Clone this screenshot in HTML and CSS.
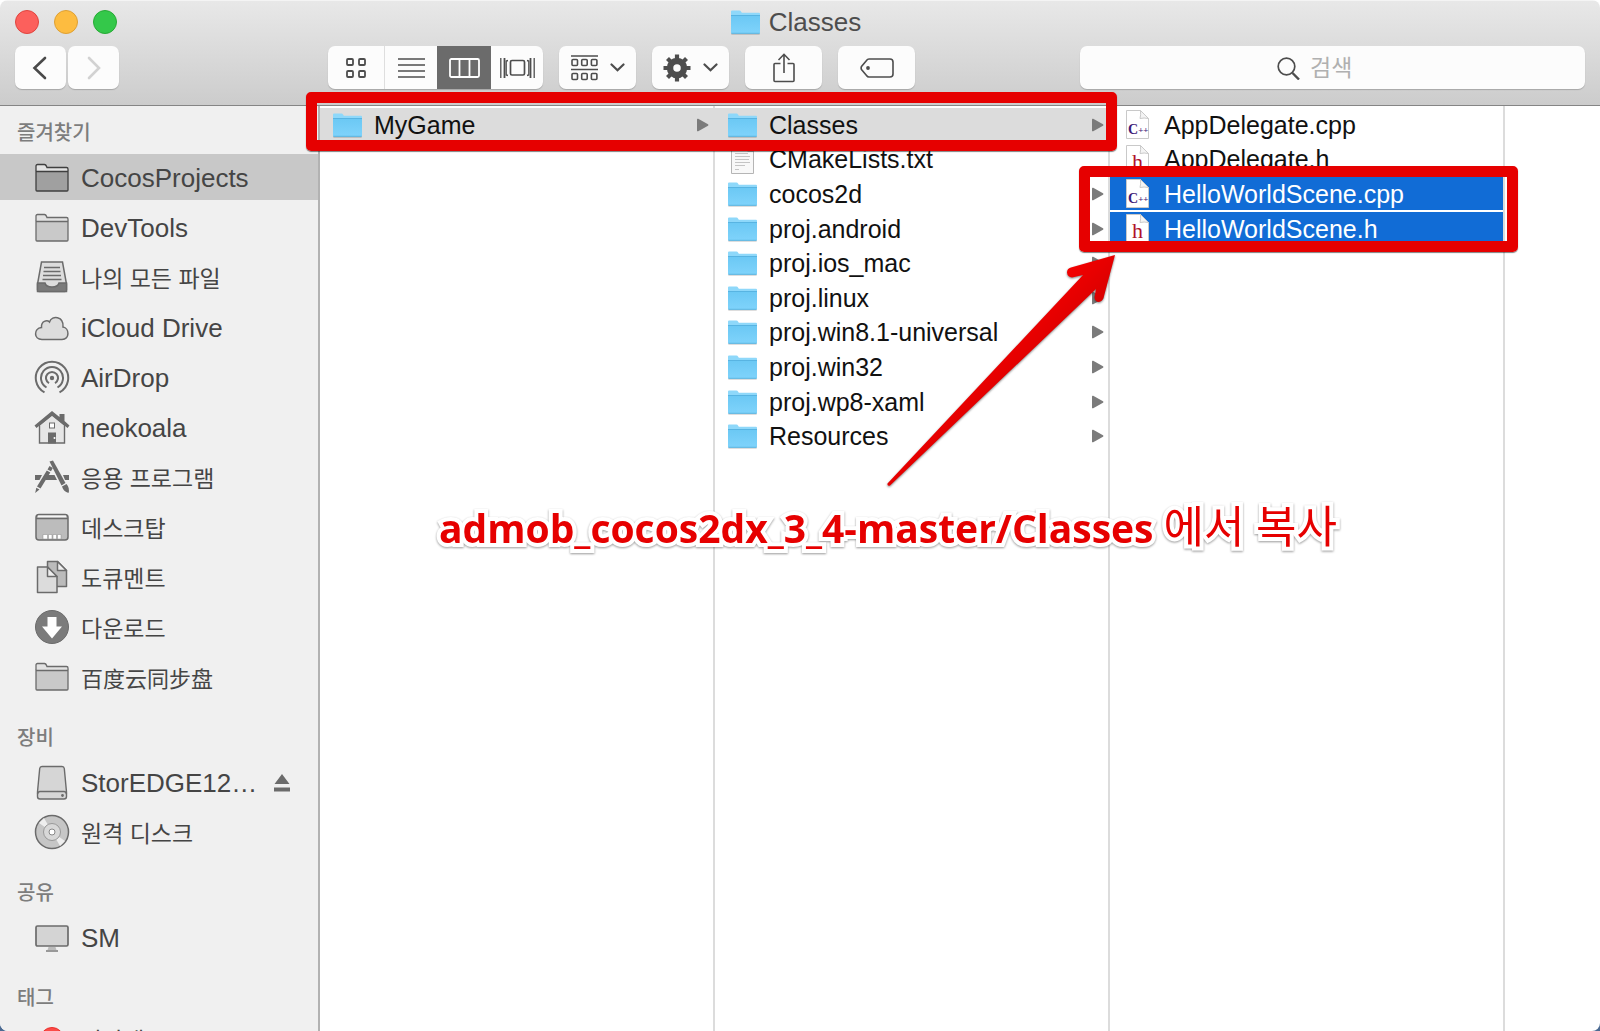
FILE: index.html
```html
<!DOCTYPE html>
<html lang="ko">
  <head>
    <meta charset="UTF-8" />
    <meta name="viewport" content="width=device-width, initial-scale=1.0" />
    <title>Classes</title>
    <link rel="stylesheet" href="styles.css">
  </head>
  <body>
    <!-- Shared icons -->
    <svg class="sprite" aria-hidden="true">
      <defs>
        <linearGradient id="folderFill" x1="0" y1="0" x2="0" y2="1">
          <stop offset="0" stop-color="#6bc8f4" />
          <stop offset="1" stop-color="#7fd3fb" />
        </linearGradient>
        <linearGradient id="arrowFill" x1="0" y1="0" x2="1" y2="1">
          <stop offset="0.4" stop-color="#f80000" />
          <stop offset="0.6" stop-color="#d40000" />
        </linearGradient>
      </defs>
      <symbol id="folder" viewBox="0 0 29 24">
        <path d="M0 23V1.500Q0 .5 1 .5H8.500Q9.500 .5 10 1.500L10.800 2.800H28Q29 2.800 29 3.800V23Z" fill="#8ed8fa" />
        <path d="M0 5.500H29V22.500Q29 23.500 28 23.500H1Q0 23.500 0 22.500Z" fill="url(#folderFill)" />
        <path d="M0 5.500H29M.5 23.300H28.500" stroke="#58b4e2" fill="none" />
      </symbol>
      <symbol id="page" viewBox="0 0 23 29">
        <path d="M.5 .5H14.500L22.500 8.500V28.500H.5Z" fill="#fff" stroke="#c9c9c9" />
        <path d="M14.500 .5Q15 5 14 8.500Q18 7.500 22.500 8.500Z" fill="#f4f4f4" stroke="#c9c9c9" />
      </symbol>
      <symbol id="text-page" viewBox="0 0 23 29">
        <path d="M.5 .5H16.500L22.500 6.500V28.500H.5Z" fill="#f8f8f8" stroke="#b5b5b5" />
        <path d="M16.500 .5V6.500H22.500Z" fill="#999" />
        <path d="M4 8.500H17M4 11.500H19M4 14.500H18M4 17.500H19M4 20.500H14M4 24.500H8" stroke="#c4c4c4" />
      </symbol>
      <symbol id="side-folder" viewBox="0 0 36 36">
        <path d="M2 11V6Q2 4.500 3.500 4.500H10.500Q12 4.500 13 7.500H32.500Q34 7.500 34 9V11" fill="#e2e2e2" stroke="currentColor" stroke-width="1.300" />
        <path d="M2 11.500H34V30Q34 31 33 31H3Q2 31 2 30Z" fill="var(--fill)" stroke="currentColor" stroke-width="1.300" />
      </symbol>
      <symbol id="more" viewBox="0 0 12 14">
        <path d="M0 1.500Q0 .3 1.200 .8L11 6.200Q12 7 11 7.800L1.200 13.200Q0 13.700 0 12.500Z" fill="currentColor" />
      </symbol>
      <symbol id="chevron" viewBox="0 0 15 9">
        <path d="M1.500 1.500L7.500 7.200L13.500 1.500" fill="none" stroke="#4d4d4d" stroke-width="2.200" stroke-linecap="round" />
      </symbol>
    </svg>

    <div class="window">
      <header class="header">
        <div class="titlebar">
          <div class="lights">
            <button class="light close" aria-label="닫기"></button>
            <button class="light minimize" aria-label="최소화"></button>
            <button class="light maximize" aria-label="확대"></button>
          </div>
          <h1 class="title">
            <svg class="folder"><use href="#folder" /></svg>
            Classes
          </h1>
        </div>

        <div class="toolbar">
          <div class="nav">
            <button class="btn" aria-label="뒤로">
              <svg width="18" height="24" viewBox="0 0 18 24"><path d="M13 2L2.500 12L13 22" fill="none" stroke="#4a4a4a" stroke-width="2.600" stroke-linecap="round" /></svg>
            </button>
            <button class="btn" aria-label="앞으로">
              <svg width="16" height="24" viewBox="0 0 16 24"><path d="M3 2L13 12L3 22" fill="none" stroke="#d2d2d2" stroke-width="2.600" stroke-linecap="round" /></svg>
            </button>
          </div>

          <div class="views">
            <button class="view first" aria-label="아이콘 보기">
              <svg width="20" height="20" viewBox="0 0 20 20" fill="none" stroke="#4d4d4d" stroke-width="1.800">
                <rect x="1" y="1" width="6" height="6" rx="1" /><rect x="13" y="1" width="6" height="6" rx="1" />
                <rect x="1" y="13" width="6" height="6" rx="1" /><rect x="13" y="13" width="6" height="6" rx="1" />
              </svg>
            </button>
            <button class="view" aria-label="목록 보기">
              <svg width="27" height="20" viewBox="0 0 27 20"><path d="M0 1H27M0 7H27M0 13H27M0 19H27" stroke="#4d4d4d" stroke-width="1.500" /></svg>
            </button>
            <button class="view active" aria-label="계층 보기">
              <svg width="31" height="20" viewBox="0 0 31 20" fill="none" stroke="#fff" stroke-width="1.800">
                <rect x="1" y="1" width="29" height="18" rx="1.500" /><path d="M10.500 1V19M20.500 1V19" />
              </svg>
            </button>
            <button class="view" aria-label="커버플로우 보기">
              <svg width="35" height="20" viewBox="0 0 35 20" fill="none" stroke="#4d4d4d" stroke-width="1.300">
                <path d="M.8 0V20M34.200 0V20" /><path d="M4.500 0V20M30.500 0V20" stroke-width="1.800" />
                <path d="M8 2.500L6.200 3V17L8 17.500M27 2.500L28.800 3V17L27 17.500" />
                <rect x="10.500" y="2.500" width="14" height="14.500" rx="1.500" stroke-width="1.700" />
              </svg>
            </button>
          </div>

          <button class="btn wide" aria-label="항목 정렬">
            <svg width="27" height="26" viewBox="0 0 27 26" fill="none" stroke="#4d4d4d" stroke-width="1.600">
              <path d="M0 1H27M0 14.500H27" />
              <rect x="1" y="4.500" width="5.500" height="6" rx="1" /><rect x="10.700" y="4.500" width="5.500" height="6" rx="1" /><rect x="20.400" y="4.500" width="5.500" height="6" rx="1" />
              <rect x="1" y="18.500" width="5.500" height="6" rx="1" /><rect x="10.700" y="18.500" width="5.500" height="6" rx="1" /><rect x="20.400" y="18.500" width="5.500" height="6" rx="1" />
            </svg>
            <svg class="chevron"><use href="#chevron" /></svg>
          </button>
          <button class="btn wide" aria-label="동작">
            <svg width="28" height="28" viewBox="-14 -14 28 28" stroke="#4d4d4d">
              <circle r="7" fill="none" stroke-width="6.500" />
              <path d="M0 -8.500V-13.500M0 8.500V13.500M-8.500 0H-13.500M8.500 0H13.500M6 -6L9.500 -9.500M-6 -6L-9.500 -9.500M6 6L9.500 9.500M-6 6L-9.500 9.500" stroke-width="4.200" />
            </svg>
            <svg class="chevron"><use href="#chevron" /></svg>
          </button>
          <button class="btn wide" aria-label="공유">
            <svg width="22" height="30" viewBox="0 0 22 30" fill="none" stroke="#4d4d4d" stroke-width="1.600">
              <path d="M7.500 10.500H2Q1 10.500 1 11.500V27.500Q1 28.500 2 28.500H20Q21 28.500 21 27.500V11.500Q21 10.500 20 10.500H14.500" />
              <path d="M11 20V1.500M5.500 7L11 1.300L16.500 7" />
            </svg>
          </button>
          <button class="btn wide" aria-label="태그 편집">
            <svg width="34" height="20" viewBox="0 0 34 20" fill="none" stroke="#4d4d4d" stroke-width="1.600">
              <path d="M9 1H30Q33 1 33 4V16Q33 19 30 19H9Q7.500 19 6.500 17.500L1.500 11.500Q.7 10 1.500 8.500L6.500 2.500Q7.500 1 9 1Z" />
              <circle cx="8" cy="10" r="1.900" fill="#4d4d4d" stroke="none" />
            </svg>
          </button>

          <label class="search">
            <svg width="23" height="24" viewBox="0 0 23 24" fill="none" stroke="#4d4d4d">
              <circle cx="9.500" cy="10.500" r="8.300" stroke-width="1.700" /><path d="M15.500 17L22 23.500" stroke-width="2.400" />
            </svg>
            <input type="search" placeholder="검색" aria-label="검색" />
          </label>
        </div>
      </header>

      <main class="content">
        <nav class="sidebar">
          <h2>즐겨찾기</h2>
          <ul>
            <li>
              <a class="selected" href="#"><svg><use href="#side-folder" /></svg>CocosProjects</a>
            </li>
            <li>
              <a href="#"><svg><use href="#side-folder" /></svg>DevTools</a>
            </li>
            <li>
              <a class="cjk" href="#">
                <svg viewBox="0 0 36 36" stroke="currentColor" stroke-width="1.500">
                  <path d="M7.500 3H28.500L32.500 25V31Q32.500 32.500 31 32.500H5Q3.500 32.500 3.500 31V25Z" fill="#ddd" />
                  <path d="M3.500 24H11Q12 28 18 28T25 24H32.500V32.500H3.500Z" fill="#7b7b7b" />
                  <path d="M10 8.500H26M9.500 12.500H26.500M9 16.500H27M8.500 20.500H27.500" />
                </svg>나의 모든 파일
              </a>
            </li>
            <li>
              <a href="#">
                <svg viewBox="0 0 36 36"><path d="M8 29.500C-.5 29.500-.5 18.500 7.500 17.500C7 11 13 9.500 15.500 12C18 4.500 30 6.500 29 17C35.500 18 36 29.500 28 29.500Z" fill="#ddd" stroke="currentColor" stroke-width="1.500" /></svg>iCloud Drive
              </a>
            </li>
            <li>
              <a href="#">
                <svg viewBox="0 0 36 36" fill="none" stroke="currentColor" stroke-width="2">
                  <circle cx="18" cy="18" r="2.200" fill="currentColor" stroke="none" />
                  <path d="M15 23.200A6 6 0 1 1 21 23.200M12.500 27.500A11 11 0 1 1 23.500 27.500M10.500 32.300A16.200 16.200 0 1 1 25.500 32.300" />
                </svg>AirDrop
              </a>
            </li>
            <li>
              <a href="#">
                <svg viewBox="0 0 36 36">
                  <path d="M5.500 15L18 5L30.500 15V33H5.500Z" fill="#e6e6e6" stroke="currentColor" stroke-width="1.400" />
                  <path d="M25.500 4H30.500V11L35.500 15.500L33.500 18L18 5.500L2.500 18L.5 15.500L18 1L25.500 7Z" fill="currentColor" />
                  <rect x="15.500" y="13" width="5" height="5" fill="#fff" stroke="currentColor" />
                  <rect x="14" y="22.500" width="8" height="11" fill="currentColor" /><circle cx="20.500" cy="28" r="1" fill="#fff" />
                </svg>neokoala
              </a>
            </li>
            <li>
              <a class="cjk" href="#">
                <svg viewBox="0 0 36 36" fill="currentColor">
                  <path d="M1 16H8L5.500 21H1ZM13.500 16H20.500L23 21H11ZM29 16H35V21H31Z" />
                  <path d="M15.500 2.500L19 1.500L31.500 24L27.500 26.500Z" />
                  <path d="M28 27.500L32.500 25Q36 29 34.500 34Q29.500 32.500 28 27.500Z" />
                  <path d="M15.500 7L18.800 9L17 12.300L13.500 10.500ZM12.800 11.500L16.300 13.500L6.500 29.500L3 27.500ZM2.300 28.800L5.500 30.500L1.200 34Z" />
                </svg>응용 프로그램
              </a>
            </li>
            <li>
              <a class="cjk" href="#">
                <svg viewBox="0 0 36 36">
                  <rect x="2" y="5.500" width="32" height="25.500" rx="3" fill="#bcbcbc" stroke="currentColor" stroke-width="1.500" />
                  <path d="M4 7.500H32" stroke="#f6f6f6" stroke-width="2" /><path d="M2 9.500H34" stroke="currentColor" stroke-width="1.500" />
                  <path d="M9 25.500H13.500V30H9ZM14.500 25.500H18V30H14.500ZM19 25.500H22.500V30H19ZM23.500 25.500H27V30H23.500Z" fill="#fff" stroke="#888" stroke-width=".5" />
                </svg>데스크탑
              </a>
            </li>
            <li>
              <a class="cjk" href="#">
                <svg viewBox="0 0 36 36" stroke="currentColor" stroke-width="1.500" stroke-linejoin="round">
                  <path d="M13.500 2.500H23.500L32.500 11.500V27.500H13.500Z" fill="#bbb" /><path d="M23.500 2.500V11.500H32.500Z" fill="#eee" />
                  <path d="M3.500 8H13.500L23 17.500V33.500H3.500Z" fill="#dcdcdc" /><path d="M13.500 8V17.500H23Z" fill="#eee" />
                </svg>도큐멘트
              </a>
            </li>
            <li>
              <a class="cjk" href="#">
                <svg viewBox="0 0 36 36">
                  <circle cx="18" cy="18" r="16.500" fill="#7b7b7b" stroke="currentColor" />
                  <path d="M13.500 8H22.500V17.500H28L18 29.500L8 17.500H13.500Z" fill="#fff" />
                </svg>다운로드
              </a>
            </li>
            <li>
              <a class="cjk hans" lang="zh" href="#"><svg><use href="#side-folder" /></svg>百度云同步盘</a>
            </li>
          </ul>

          <h2>장비</h2>
          <ul>
            <li>
              <a href="#">
                <svg viewBox="0 0 36 36" stroke="currentColor" stroke-width="1.400">
                  <path d="M8 1.500H28Q30 1.500 30.300 3.500L32.500 27V31.500Q32.500 34 30 34H6Q3.500 34 3.500 31.500V27L5.700 3.500Q6 1.500 8 1.500Z" fill="#d6d6d6" />
                  <path d="M3.500 29Q4 26.500 6 26.500H30Q32 26.500 32.500 29" fill="none" /><circle cx="28.500" cy="30.500" r=".7" />
                </svg>StorEDGE12…
                <svg class="eject" viewBox="0 0 16 18"><path d="M8 0L15.500 10H.5ZM0 13.500H16V17.500H0Z" fill="currentColor" /></svg>
              </a>
            </li>
            <li>
              <a class="cjk" href="#">
                <svg viewBox="0 0 36 36">
                  <circle cx="18" cy="18" r="16.500" fill="#c6c6c6" stroke="currentColor" stroke-width="1.500" />
                  <path d="M18 18L5 9L10 4ZM18 18L31 27L26 32Z" fill="#eee" />
                  <circle cx="18" cy="18" r="8.500" fill="#d8d8d8" stroke="#999" /><circle cx="18" cy="18" r="3" fill="#fff" stroke="#888" />
                </svg>원격 디스크
              </a>
            </li>
          </ul>

          <h2>공유</h2>
          <ul>
            <li>
              <a href="#">
                <svg viewBox="0 0 36 36">
                  <rect x="2" y="6" width="32" height="20" rx="1.500" fill="#d4d4d4" stroke="currentColor" stroke-width="1.700" />
                  <path d="M14.500 27H21.500L22.500 30H13.500Z" fill="#bbb" /><path d="M12 30H24V32H12Z" fill="#999" />
                </svg>SM
              </a>
            </li>
          </ul>

          <h2>태그</h2>
          <ul class="tags">
            <li>
              <a class="cjk" href="#">
                <svg viewBox="0 0 36 36"><circle cx="18" cy="18" r="11.500" fill="#fc4b48" stroke="#e8302c" /></svg>빨간색
              </a>
            </li>
          </ul>
        </nav>

        <section class="column">
          <ul>
            <li><a class="path" href="#"><svg class="folder"><use href="#folder" /></svg>MyGame<svg class="more"><use href="#more" /></svg></a></li>
          </ul>
        </section>

        <section class="column">
          <ul>
            <li><a class="path" href="#"><svg class="folder"><use href="#folder" /></svg>Classes<svg class="more"><use href="#more" /></svg></a></li>
            <li><a href="#"><svg class="page"><use href="#text-page" /></svg>CMakeLists.txt</a></li>
            <li><a href="#"><svg class="folder"><use href="#folder" /></svg>cocos2d<svg class="more"><use href="#more" /></svg></a></li>
            <li><a href="#"><svg class="folder"><use href="#folder" /></svg>proj.android<svg class="more"><use href="#more" /></svg></a></li>
            <li><a href="#"><svg class="folder"><use href="#folder" /></svg>proj.ios_mac<svg class="more"><use href="#more" /></svg></a></li>
            <li><a href="#"><svg class="folder"><use href="#folder" /></svg>proj.linux<svg class="more"><use href="#more" /></svg></a></li>
            <li><a href="#"><svg class="folder"><use href="#folder" /></svg>proj.win8.1-universal<svg class="more"><use href="#more" /></svg></a></li>
            <li><a href="#"><svg class="folder"><use href="#folder" /></svg>proj.win32<svg class="more"><use href="#more" /></svg></a></li>
            <li><a href="#"><svg class="folder"><use href="#folder" /></svg>proj.wp8-xaml<svg class="more"><use href="#more" /></svg></a></li>
            <li><a href="#"><svg class="folder"><use href="#folder" /></svg>Resources<svg class="more"><use href="#more" /></svg></a></li>
          </ul>
        </section>

        <section class="column">
          <ul>
            <li><a href="#"><svg class="page" viewBox="0 0 23 29"><use href="#page" /><text class="cpp" x="2" y="24">C<tspan class="plus" dy="-1">++</tspan></text></svg>AppDelegate.cpp</a></li>
            <li><a href="#"><svg class="page" viewBox="0 0 23 29"><use href="#page" /><text class="hdr" x="6" y="24">h</text></svg>AppDelegate.h</a></li>
            <li><a class="picked" href="#"><svg class="page" viewBox="0 0 23 29"><use href="#page" /><text class="cpp" x="2" y="24">C<tspan class="plus" dy="-1">++</tspan></text></svg>HelloWorldScene.cpp</a></li>
            <li><a class="picked" href="#"><svg class="page" viewBox="0 0 23 29"><use href="#page" /><text class="hdr" x="6" y="24">h</text></svg>HelloWorldScene.h</a></li>
          </ul>
        </section>
      </main>

      <!-- Annotations drawn over the window -->
      <div class="mark mark-path"></div>
      <div class="mark mark-files"></div>
      <svg class="arrow" viewBox="0 0 240 246" aria-hidden="true">
        <path d="M7.500 233.500L203 25L192 27.500Q187.500 27 187 22.500Q187 18.500 191 17.500L235 5L223.500 48Q222 52 218 52Q214.500 51 214.500 47L216 39L10 235.500Q7 236.500 7.500 233.500Z" fill="url(#arrowFill)" />
      </svg>
      <p class="note"><b>admob_cocos2dx_3_4-master/Classes</b> <span>에서 복사</span></p>
    </div>
  </body>
</html>
```
FILE: styles.css
```css
:root {
  --red: #e60000;
  --blue: #116cd6;
  --sidebar-bg: #f0f0f0;
  --sidebar-text: #454545;
  --btn-bg: #fcfcfc;
  --line: #dcdcdc;
}

* {
  box-sizing: border-box;
}

body {
  margin: 0;
  background: linear-gradient(#fff, #4b6a92);
  font-family: "Liberation Sans", "Noto Sans CJK KR", sans-serif;
  color: #111;
}

.sprite {
  position: absolute;
  width: 0;
  height: 0;
}

.window {
  position: relative;
  display: flex;
  flex-direction: column;
  height: 100vh;
  border-radius: 8px;
  overflow: hidden;
  background: #fff;
}

ul {
  list-style: none;
  margin: 0;
  padding: 0;
}

a {
  color: inherit;
  text-decoration: none;
}

button {
  border: 0;
  padding: 0;
}

svg {
  flex-shrink: 0;
}

/* Header */
.header {
  height: 106px;
  background: linear-gradient(#e8e8e8, #cccccc);
  border-top: 1px solid #f4f4f4;
  border-bottom: 1px solid #858585;
}

.titlebar {
  display: grid;
  grid-template-columns: 1fr auto 1fr;
  align-items: center;
  height: 42px;
  margin-bottom: 3px;
  padding: 0 23px 0 15px;
}

.lights {
  display: flex;
  gap: 15px;
}

.light {
  width: 24px;
  height: 24px;
  border-radius: 50%;
}

.close {
  background: #fc605c;
  border: 1px solid #e0443e;
}

.minimize {
  background: #fdbc40;
  border: 1px solid #dea034;
}

.maximize {
  background: #34c84a;
  border: 1px solid #27aa35;
}

.title {
  display: flex;
  align-items: center;
  gap: 9px;
  margin: 0;
  font-size: 26px;
  line-height: 32px;
  font-weight: normal;
  color: #4d4d4d;
}

.folder {
  width: 29px;
  height: 24px;
  filter: drop-shadow(0 1px 0 rgba(0, 0, 0, 0.15));
}

.toolbar {
  display: flex;
  gap: 16px;
  padding: 0 15px;
}

.nav {
  display: flex;
  gap: 2px;
  width: 297px;
}

.btn,
.views,
.search {
  height: 43px;
  border-radius: 7px;
  background: var(--btn-bg);
  box-shadow: 0 1px 1px rgba(0, 0, 0, 0.2);
}

.btn,
.view {
  display: flex;
  align-items: center;
  justify-content: center;
  gap: 12px;
}

.btn {
  width: 51px;
}

.btn.wide {
  width: 77px;
}

.chevron {
  width: 15px;
  height: 9px;
}

.views {
  display: flex;
  overflow: hidden;
}

.view {
  width: 52px;
  background: none;
}

.view.first {
  width: 57px;
  border-right: 1px solid #dedede;
}

.view.active {
  width: 54px;
  background: #6b6b6b;
}

.search {
  display: flex;
  flex: 1;
  align-items: center;
  justify-content: center;
  gap: 10px;
  margin-left: 149px;
}

.search input {
  width: 78px;
  padding: 0;
  border: 0;
  outline: 0;
  background: none;
  font-family: inherit;
  font-size: 23px;
  line-height: 32px;
}

.search input::placeholder {
  color: #b0b0b0;
}

/* Content */
.content {
  display: grid;
  grid-template-columns: 320px repeat(3, 395px) 1fr;
  flex: 1;
  min-height: 0;
}

.sidebar {
  padding-top: 4px;
  overflow: hidden;
  background: var(--sidebar-bg);
  border-right: 2px solid #b2b2b2;
  color: var(--sidebar-text);
}

.sidebar h2 {
  margin: 0;
  padding: 2px 0 0 17px;
  font-size: 20px;
  line-height: 42px;
  font-weight: 500;
  color: #7d7d7d;
}

.sidebar ul {
  display: grid;
  gap: 4px;
  margin-bottom: 15px;
}

.sidebar a {
  --fill: #c9c9c9;
  display: flex;
  align-items: center;
  gap: 11px;
  height: 46px;
  padding: 2px 28px 0 34px;
  font-size: 26px;
}

.sidebar a.cjk {
  padding-top: 0;
  font-size: 23px;
}

.sidebar a.hans {
  font-family: "Noto Sans CJK SC", sans-serif;
  font-size: 22px;
}

.sidebar a.selected {
  --fill: #a0a0a0;
  background: #c8c8c8;
}

.sidebar .tags a {
  height: 40px;
}

.sidebar svg {
  width: 36px;
  height: 36px;
  color: #6b6b6b;
}

.sidebar .selected svg {
  color: #3f3f3f;
}

.sidebar .eject {
  width: 16px;
  height: 18px;
  margin-left: auto;
}

.column {
  padding-top: 2px;
  border-right: 2px solid var(--line);
}

/* ten rows share this height */
.column ul {
  display: grid;
  grid-template-rows: repeat(10, 1fr);
  height: 346px;
}

.column li {
  padding-bottom: 2px;
}

.column a {
  display: flex;
  align-items: center;
  gap: 12px;
  height: 100%;
  padding: 1px 4px 0 13px;
  font-size: 25px;
  line-height: 30px;
}

.path {
  background: #dcdcdc;
}

.picked {
  background: var(--blue);
  color: #fff;
}

.page {
  width: 23px;
  height: 29px;
  margin: 0 3px;
}

.more {
  width: 12px;
  height: 14px;
  margin-left: auto;
  color: #7b7b7b;
}

.cpp {
  font: bold 14px "Liberation Serif", serif;
  fill: #3d1a78;
}

.plus {
  font-size: 9px;
}

.hdr {
  font: 22px "Liberation Serif", serif;
  fill: #b0122b;
}

/* Annotations */
.mark {
  position: absolute;
  border: 11px solid var(--red);
  border-radius: 5px;
  box-shadow: 0 1px 1px rgba(0, 0, 0, 0.5);
}

.mark-path {
  left: 306px;
  top: 92px;
  width: 811px;
  height: 59px;
}

.mark-files {
  left: 1079px;
  top: 166px;
  width: 439px;
  height: 86px;
}

.arrow {
  position: absolute;
  left: 880px;
  top: 250px;
  width: 240px;
  height: 246px;
  filter: drop-shadow(0 1px 1px rgba(0, 0, 0, 0.5));
}

.note {
  position: absolute;
  left: 439px;
  top: 498px;
  margin: 0;
  font-family: "Open Sans", "Noto Sans CJK KR", sans-serif;
  font-size: 39px;
  line-height: 56px;
  white-space: nowrap;
  color: var(--red);
  -webkit-text-stroke: 8px #fff;
  paint-order: stroke fill;
  filter: drop-shadow(0 1px 1px rgba(0, 0, 0, 0.4));
}

.note span {
  font-size: 44px;
}
```
